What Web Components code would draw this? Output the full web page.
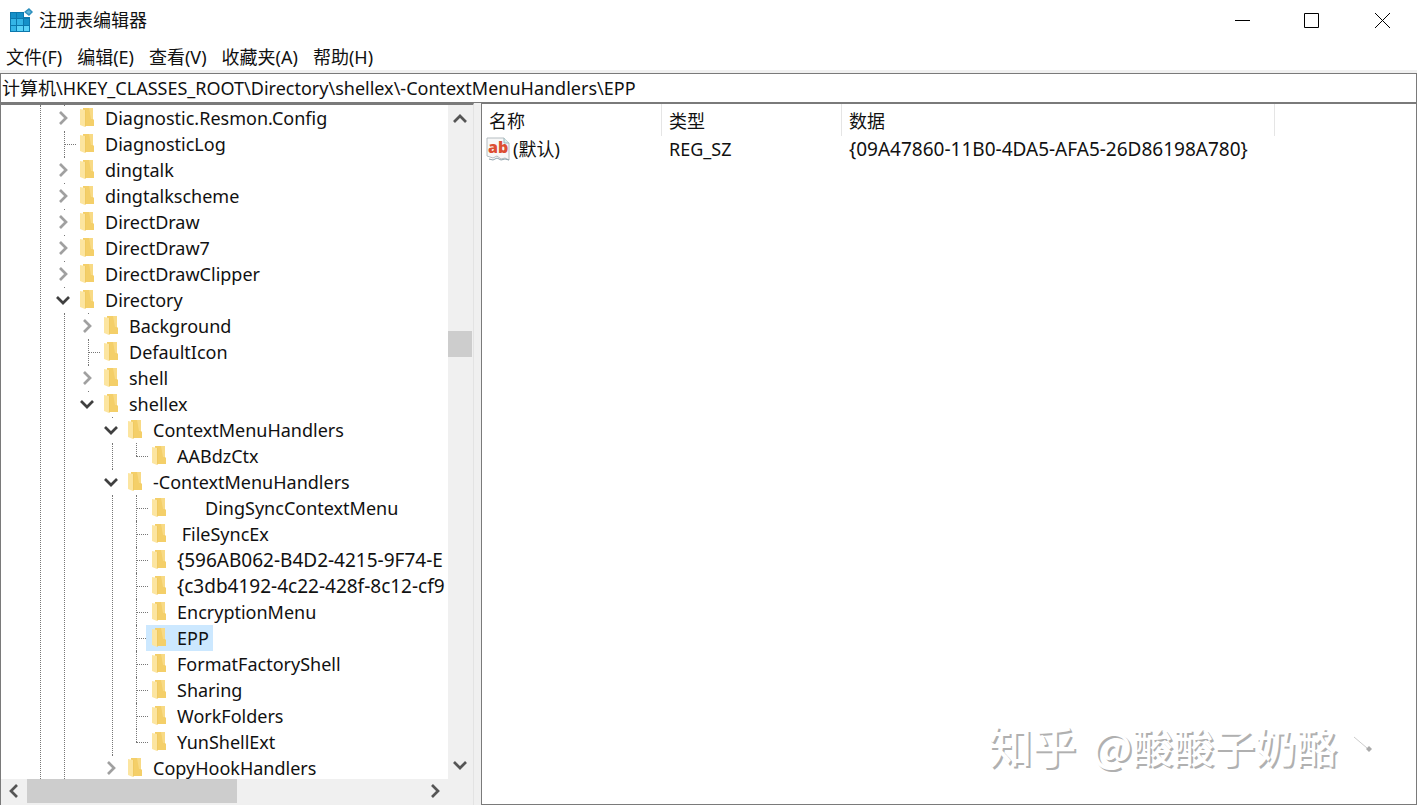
<!DOCTYPE html>
<html lang="zh-CN">
<head>
<meta charset="utf-8">
<title>注册表编辑器</title>
<style>
  body {
    margin: 0;
    font: 18px/26px "Noto Sans", "Noto Sans CJK SC", sans-serif;
    color: #111;
    background: #fff;
  }
</style>
</head>
<body>
<reg-editor>
  <title-bar slot="title">注册表编辑器</title-bar>
  <menu-bar slot="menu">
    <menu-entry>文件(F)</menu-entry>
    <menu-entry>编辑(E)</menu-entry>
    <menu-entry>查看(V)</menu-entry>
    <menu-entry>收藏夹(A)</menu-entry>
    <menu-entry>帮助(H)</menu-entry>
  </menu-bar>
  <address-bar slot="address" value="计算机\HKEY_CLASSES_ROOT\Directory\shellex\-ContextMenuHandlers\EPP"></address-bar>
  <key-tree slot="tree">
    <reg-key label="Diagnostic.Resmon.Config" state="closed"></reg-key>
    <reg-key label="DiagnosticLog"></reg-key>
    <reg-key label="dingtalk" state="closed"></reg-key>
    <reg-key label="dingtalkscheme" state="closed"></reg-key>
    <reg-key label="DirectDraw" state="closed"></reg-key>
    <reg-key label="DirectDraw7" state="closed"></reg-key>
    <reg-key label="DirectDrawClipper" state="closed"></reg-key>
    <reg-key label="Directory" state="open">
      <reg-key label="Background" state="closed"></reg-key>
      <reg-key label="DefaultIcon"></reg-key>
      <reg-key label="shell" state="closed"></reg-key>
      <reg-key label="shellex" state="open" last>
        <reg-key label="ContextMenuHandlers" state="open">
          <reg-key label="AABdzCtx" last></reg-key>
        </reg-key>
        <reg-key label="-ContextMenuHandlers" state="open">
          <reg-key label="      DingSyncContextMenu"></reg-key>
          <reg-key label=" FileSyncEx"></reg-key>
          <reg-key label="{596AB062-B4D2-4215-9F74-E" guid></reg-key>
          <reg-key label="{c3db4192-4c22-428f-8c12-cf9" guid></reg-key>
          <reg-key label="EncryptionMenu"></reg-key>
          <reg-key label="EPP" selected></reg-key>
          <reg-key label="FormatFactoryShell"></reg-key>
          <reg-key label="Sharing"></reg-key>
          <reg-key label="WorkFolders"></reg-key>
          <reg-key label="YunShellExt" last></reg-key>
        </reg-key>
        <reg-key label="CopyHookHandlers" state="closed"></reg-key>
      </reg-key>
    </reg-key>
  </key-tree>
  <value-list slot="values"></value-list>
  <water-mark slot="mark"></water-mark>
</reg-editor>

<script>
function attach(el, html) {
  const template = document.createElement("template")
  template.innerHTML = html
  el.attachShadow({mode: "open"}).appendChild(template.content.cloneNode(true))
}

const buttonReset = `
  button {
    font: inherit;
    color: inherit;
    background: none;
    border: 0;
    margin: 0;
    padding: 0;
  }
`

const arrows = {
  up: "M1 10 L7 4 L13 10",
  down: "M1 4 L7 10 L13 4",
  left: "M10 1 L4 7 L10 13",
  right: "M4 1 L10 7 L4 13"
}

function arrow(direction, color) {
  return `<svg width="14" height="14" viewBox="0 0 14 14"><path d="${arrows[direction]}" fill="none" stroke="${color}" stroke-width="2.7"/></svg>`
}

class RegEditor extends HTMLElement {
  constructor() {
    super()
    attach(this, `
      <style>
        :host {
          display: flex;
          flex-direction: column;
          height: 100vh;
          position: relative;
          overflow: hidden;
        }
        .panes {
          display: flex;
          flex: 1;
          min-height: 0;
          background: #f0f0f0;
        }
      </style>
      <slot name="title"></slot>
      <slot name="menu"></slot>
      <slot name="address"></slot>
      <div class="panes">
        <slot name="tree"></slot>
        <slot name="values"></slot>
      </div>
      <slot name="mark"></slot>
    `)
  }
}

class TitleBar extends HTMLElement {
  constructor() {
    super()
    attach(this, `
      <style>
        ${buttonReset}
        :host {
          display: flex;
          align-items: center;
          height: 40px;
          padding-left: 8px;
        }
        .name {
          flex: 1;
          padding-left: 5px;
        }
        button {
          width: 70px;
          height: 40px;
        }
        svg {
          display: block;
          margin: auto;
        }
        .logo {
          margin: 0;
        }
      </style>
      <svg class="logo" width="26" height="26" viewBox="0 0 26 26">
        <path d="M2 5h14v5h6v15H2z" fill="#0c78ad"/>
        <path d="M3 6h5v5H3zM9 6h6v5H9z" fill="#1590c8"/>
        <path d="M3 12h5v6H3zM9 12h6v6H9z" fill="#35b5e6"/>
        <path d="M16 12h5v6h-5z" fill="#1590c8"/>
        <path d="M3 19h5v5H3z" fill="#35b5e6"/>
        <path d="M9 19h6v5H9zM16 19h5v5h-5z" fill="#5ad2f7"/>
        <path d="M21 1l4 4-4 4-5-4z" fill="#2d8fbd"/>
        <path d="M21 3l2 2-2 2-3-2z" fill="#5fb4d8"/>
      </svg>
      <span class="name"><slot></slot></span>
      <button aria-label="最小化"><svg width="16" height="16"><path d="M1 8.500h15" stroke="#000"/></svg></button>
      <button aria-label="最大化"><svg width="16" height="16"><path d="M.5 1.500h14v14h-14z" fill="none" stroke="#000"/></svg></button>
      <button aria-label="关闭"><svg width="16" height="16"><path d="M1 1l15 15M16 1L1 16" stroke="#000"/></svg></button>
    `)
  }
}

class MenuBar extends HTMLElement {
  constructor() {
    super()
    attach(this, `
      <style>
        :host {
          display: flex;
          gap: 15px;
          height: 26px;
          padding: 4px 0 0 6px;
          border-bottom: 3px solid #f0f0f0;
        }
      </style>
      <slot></slot>
    `)
  }
}

class MenuEntry extends HTMLElement {
  constructor() {
    super()
    attach(this, `
      <style>
        ${buttonReset}
        :host {
          display: block;
        }
      </style>
      <button><slot></slot></button>
    `)
  }
}

class AddressBar extends HTMLElement {
  constructor() {
    super()
    attach(this, `
      <style>
        :host {
          display: block;
        }
        input {
          display: block;
          box-sizing: border-box;
          width: 100%;
          height: 30px;
          padding: 0 1px 2px;
          border: 1px solid #7a7a7a;
          font: inherit;
          color: inherit;
          outline: 0;
        }
      </style>
      <input type="text" aria-label="地址">
    `)
    this.shadowRoot.querySelector("input").value = this.getAttribute("value")
  }
}

class ScrollStrip extends HTMLElement {
  constructor() {
    super()
    const across = this.hasAttribute("horizontal")
    attach(this, `
      <style>
        ${buttonReset}
        :host {
          display: flex;
          flex-direction: ${across ? "row" : "column"};
          background: #f0f0f0;
        }
        button {
          display: grid;
          place-items: center;
          width: ${across ? 26 : 24}px;
          height: ${across ? 24 : 28}px;
        }
        .track {
          flex: 1;
          display: flex;
          flex-direction: inherit;
        }
        .before {
          flex: 0 0 var(--before, 0%);
        }
        .thumb {
          flex: 0 0 var(--thumb);
          background: #cdcdcd;
        }
      </style>
      <button aria-label="${across ? "向左" : "向上"}">${arrow(across ? "left" : "up", "#555")}</button>
      <div class="track"><div class="before"></div><div class="thumb"></div></div>
      <button aria-label="${across ? "向右" : "向下"}">${arrow(across ? "right" : "down", "#555")}</button>
    `)
  }
}

class KeyTree extends HTMLElement {
  constructor() {
    super()
    attach(this, `
      <style>
        :host {
          display: grid;
          grid-template: minmax(0, 1fr) 24px / minmax(0, 1fr) 24px;
          box-sizing: border-box;
          flex: 0 0 474px;
          border: solid #7a7a7a;
          border-width: 2px 0 0 1px;
          border-right: 1px solid #e3e3e3;
          padding: 0 1px 2px 0;
          background: #f0f0f0;
        }
        .view {
          overflow: hidden;
          background: #fff;
          padding-left: 39px;
        }
        .root {
          border-left: 1px dotted #777;
          padding-left: 11px;
        }
        .vertical {
          --before: 32%;
          --thumb: 26px;
        }
        .horizontal {
          --thumb: 210px;
        }
      </style>
      <div class="view"><div class="root" role="tree"><slot></slot></div></div>
      <scroll-strip class="vertical"></scroll-strip>
      <scroll-strip class="horizontal" horizontal></scroll-strip>
    `)
  }
}

const folder = `
  <svg class="folder" width="25" height="20" viewBox="0 0 25 20">
    <path d="M3 0h10v11l1 1v6H3z" fill="#f4cf69"/>
    <path d="M9 0h4v11h-2z" fill="#f8da85"/>
    <path d="M0 1l5 1v17l-5-2z" fill="#fce5a0"/>
    <path d="M5 2v17l1-1V2z" fill="#f0ca62"/>
  </svg>
`

class RegKey extends HTMLElement {
  constructor() {
    super()
    const state = this.getAttribute("state")
    let toggle = `<span class="cell joint"></span>`
    if (state) {
      const icon = state === "open" ? arrow("down", "#404040") : arrow("right", "#a0a0a0")
      toggle = `<button class="cell toggle" aria-label="展开">${icon}</button>`
    }

    attach(this, `
      <style>
        ${buttonReset}
        :host {
          display: block;
        }
        .row {
          display: flex;
          height: 26px;
        }
        .cell {
          flex: 0 0 24px;
          display: grid;
          place-items: center;
        }
        /* one dot of the guide line shows between two arrows */
        .toggle {
          padding-right: 2px;
          background: linear-gradient(#777, #777) 12px 0 / 1px 1px no-repeat;
        }
        .joint {
          grid-template: 13px 13px / 12px 12px;
        }
        .joint::before {
          content: "";
          grid-area: 1 / 2 / 3 / 3;
          place-self: stretch;
          border-left: 1px dotted #777;
        }
        :host([last]) .joint::before {
          grid-area: 1 / 2 / 2 / 3;
        }
        .joint::after {
          content: "";
          grid-area: 2 / 2 / 3 / 3;
          place-self: start stretch;
          border-top: 1px dotted #777;
        }
        .label {
          display: flex;
          align-items: center;
          margin-left: -2px;
          padding: 0 4px 0 6px;
          white-space: pre;
        }
        :host([selected]) .label {
          background: #cce8ff;
        }
        :host([guid]) .label {
          font-size: 19px;
        }
        .kids {
          margin-left: 12px;
          padding-left: 11px;
          border-left: 1px dotted #777;
        }
        :host([last]) .kids {
          border-left-color: transparent;
        }
      </style>
      <div class="row" role="treeitem">${toggle}<button class="label">${folder}<span class="text"></span></button></div>
      <div class="kids" role="group"><slot></slot></div>
    `)
    this.shadowRoot.querySelector(".text").textContent = this.getAttribute("label")
  }
}

class ValueList extends HTMLElement {
  constructor() {
    super()
    attach(this, `
      <style>
        :host {
          display: block;
          flex: 1;
          min-width: 0;
          margin-left: 7px;
          border: 1px solid #7a7a7a;
          background: #fff;
          overflow: hidden;
        }
        table {
          table-layout: fixed;
          width: 793px;
          border-collapse: separate;
          border-spacing: 0;
        }
        th, td {
          padding: 0 0 0 7px;
          text-align: left;
          font-weight: normal;
          white-space: nowrap;
        }
        th {
          height: 32px;
          box-sizing: border-box;
          padding-top: 2px;
          border-right: 1px solid #e5e5e5;
        }
        td {
          height: 26px;
        }
        .name {
          display: flex;
          align-items: center;
          gap: 3px;
          margin-left: -3px;
        }
        .type {
          width: 180px;
        }
        .data {
          font-size: 19px;
        }
      </style>
      <table>
        <thead>
          <tr><th class="type">名称</th><th class="type">类型</th><th>数据</th></tr>
        </thead>
        <tbody>
          <tr>
            <td>
              <div class="name">
                <svg width="24" height="24" viewBox="0 0 24 24">
                  <path d="M1 1h17l5 5v17l-4-2-4 1-4-3-4 2-6-2z" fill="#f8f8f8" stroke="#b4bcc0"/>
                  <path d="M3 22l4 1 4-2 4 2 4-1 4 1" fill="none" stroke="#8fa3ad"/>
                  <path d="M18 1v5h5" fill="#d8eef0" stroke="#9bb5b8"/>
                  <text x="2" y="16" font-family="Open Sans" font-size="16" font-weight="800" fill="#dc4f33">ab</text>
                </svg>
                <span>(默认)</span>
              </div>
            </td>
            <td>REG_SZ</td>
            <td class="data">{09A47860-11B0-4DA5-AFA5-26D86198A780}</td>
          </tr>
        </tbody>
      </table>
    `)
  }
}

class WaterMark extends HTMLElement {
  constructor() {
    super()
    attach(this, `
      <style>
        :host {
          position: absolute;
          right: 44px;
          bottom: 30px;
          display: flex;
          align-items: center;
          gap: 16px;
          font: 500 41px/60px "Noto Sans CJK SC", sans-serif;
          color: #fff;
          text-shadow: 2px 2px 0 #b0b0b0;
          white-space: nowrap;
        }
        .site {
          font-size: 44px;
        }
      </style>
      <span class="site">知乎</span>
      <span>@酸酸子奶酪</span>
      <svg width="20" height="18" viewBox="0 0 20 18">
        <path d="M1 1l13 11" stroke="#ccc"/>
        <path d="M16 10l3 3-3 3-3-3z" fill="#aaa"/>
      </svg>
    `)
  }
}

customElements.define("reg-editor", RegEditor)
customElements.define("title-bar", TitleBar)
customElements.define("menu-bar", MenuBar)
customElements.define("menu-entry", MenuEntry)
customElements.define("address-bar", AddressBar)
customElements.define("scroll-strip", ScrollStrip)
customElements.define("key-tree", KeyTree)
customElements.define("reg-key", RegKey)
customElements.define("value-list", ValueList)
customElements.define("water-mark", WaterMark)
</script>
</body>
</html>
